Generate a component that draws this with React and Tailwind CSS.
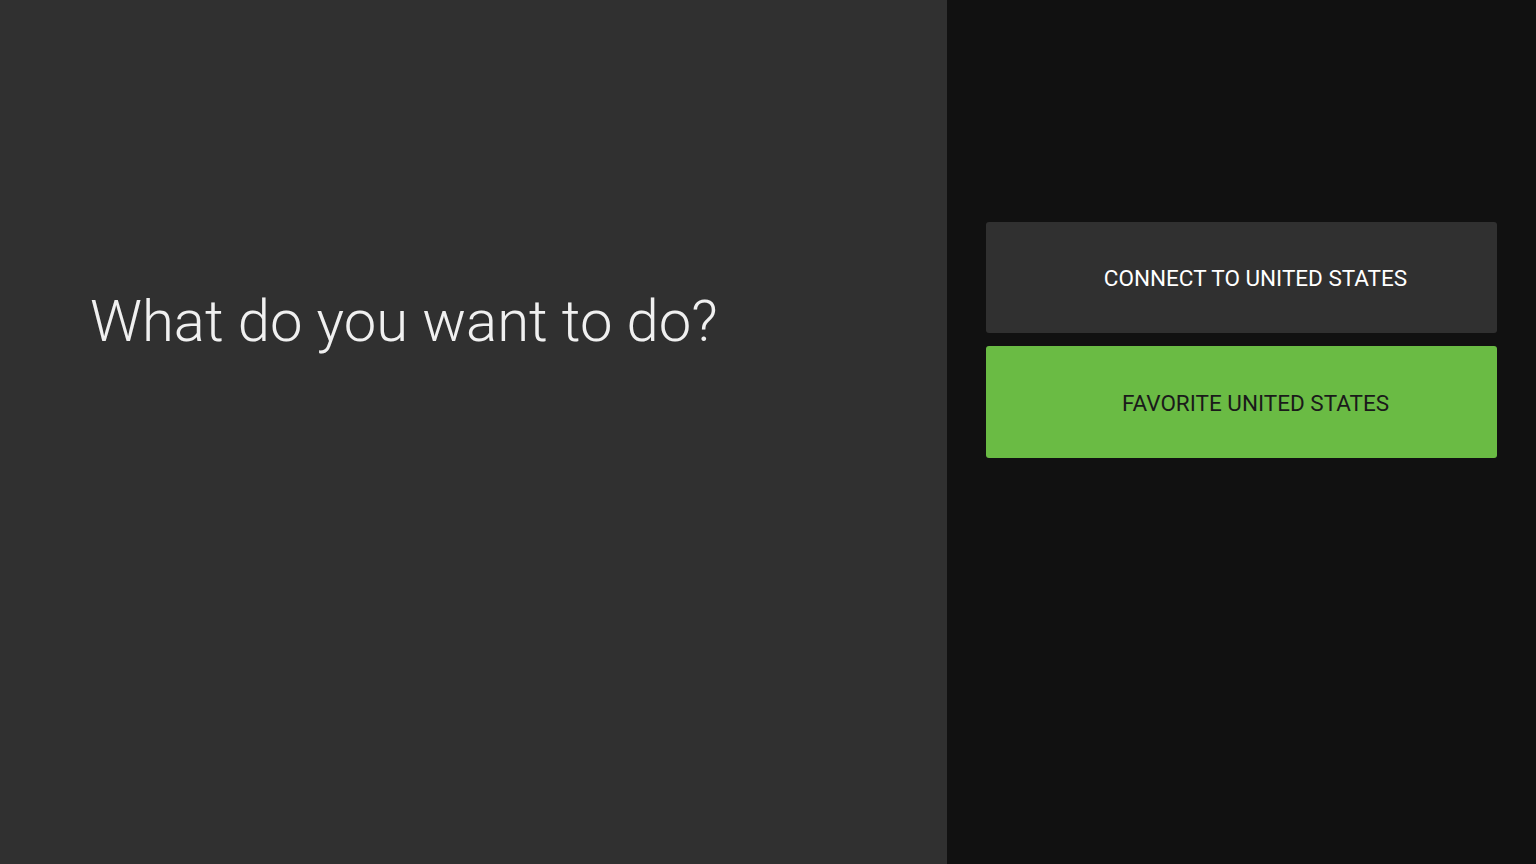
import React from "react";

const App = () => {
  return (
    <div className="flex w-screen h-screen overflow-hidden [font-family:Roboto,'Liberation_Sans',sans-serif]">
      <div className="flex items-start w-[947px] h-full bg-[#303030] pl-[90px] pt-[292px]">
        <h1 className="text-[58px] font-light text-[#f0f0f0] tracking-[0] leading-none">
          What do you want to do?
        </h1>
      </div>
      <div className="flex flex-col flex-1 h-full bg-[#111111] px-[39px] pt-[222px] gap-[13px]">
        <button className="flex items-center justify-center h-[111px] w-full pl-[28px] pt-[2px] rounded-[3px] bg-[#303030] text-white text-[22.5px] tracking-[0]">
          CONNECT TO UNITED STATES
        </button>
        <button className="flex items-center justify-center h-[112px] w-full pl-[28px] pt-[3px] rounded-[3px] bg-[#6abb44] text-[#1a1a1a] text-[22.5px] tracking-[0]">
          FAVORITE UNITED STATES
        </button>
      </div>
    </div>
  );
};

export default App;
